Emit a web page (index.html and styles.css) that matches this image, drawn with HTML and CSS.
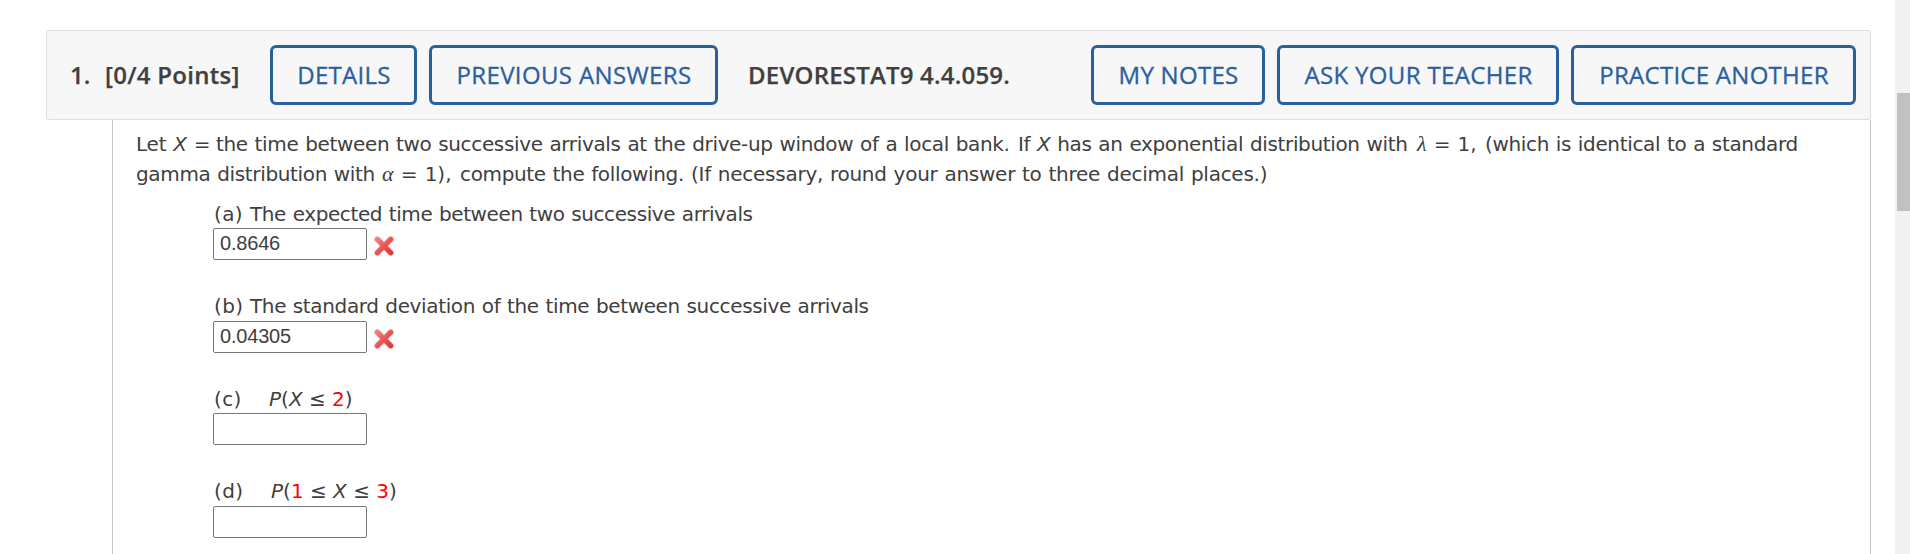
FILE: index.html
```html
<!DOCTYPE html>
<html lang="en">
<head>
<meta charset="utf-8">
<title>Question 1</title>
<link rel="stylesheet" href="styles.css">
</head>
<body>
<div class="page">
  <main class="question">
    <header class="bar">
      <span class="number">1.</span>
      <span class="points">[0/4 Points]</span>
      <button class="btn details">DETAILS</button>
      <button class="btn previous">PREVIOUS ANSWERS</button>
      <span class="code">DEVORESTAT9 4.4.059.</span>
      <button class="btn notes">MY NOTES</button>
      <button class="btn ask">ASK YOUR TEACHER</button>
      <button class="btn practice">PRACTICE ANOTHER</button>
    </header>
    <section class="body">
      <div class="prompt">
        <div class="line"><span class="intro">Let <i>X</i> =</span><span class="setup">the time between two successive arrivals at the drive-up window of a local bank.</span><span class="given">If <i>X</i> has an exponential distribution with</span><span class="lambda"><i class="greek">λ</i> = 1,</span><span>(which is identical to a standard</span></div>
        <div class="line"><span class="gamma">gamma distribution with</span><span class="alpha"><i class="greek">α</i> = 1),</span><span class="task">compute the following.</span><span class="rounding">(If necessary, round your answer to three decimal places.)</span></div>
      </div>
      <div class="part">
        <div class="label"><span class="tag">(a)</span><span class="text">The expected time between two successive arrivals</span></div>
        <div class="answer"><input class="field" value="0.8646">
          <svg class="wrong" viewBox="0 0 20 20"><defs><linearGradient id="red" gradientUnits="userSpaceOnUse" x1="2" y1="2" x2="18" y2="18"><stop offset="0" stop-color="#f28585"/><stop offset=".5" stop-color="#ea5555"/><stop offset="1" stop-color="#e03434"/></linearGradient></defs><path class="halo" d="M3.3 3.3 16.7 16.7M16.7 3.3 3.3 16.7"/><path class="cross" d="M3.3 3.3 16.7 16.7M16.7 3.3 3.3 16.7" stroke="url(#red)"/></svg></div>
      </div>
      <div class="part tall">
        <div class="label"><span class="tag">(b)</span><span class="text text-b">The standard deviation of the time between successive arrivals</span></div>
        <div class="answer"><input class="field" value="0.04305">
          <svg class="wrong" viewBox="0 0 20 20"><path class="halo" d="M3.3 3.3 16.7 16.7M16.7 3.3 3.3 16.7"/><path class="cross" d="M3.3 3.3 16.7 16.7M16.7 3.3 3.3 16.7" stroke="url(#red)"/></svg></div>
      </div>
      <div class="part">
        <div class="label"><span class="tag tag-c">(c)</span><span><i>P</i>(<i>X</i> ≤ <span class="value">2</span>)</span></div>
        <div class="answer"><input class="field"></div>
      </div>
      <div class="part tall">
        <div class="label"><span class="tag tag-d">(d)</span><span><i>P</i>(<span class="value">1</span> ≤ <i>X</i> ≤ <span class="value">3</span>)</span></div>
        <div class="answer"><input class="field"></div>
      </div>
    </section>
  </main>
  <div class="scrollbar"><div class="thumb"></div></div>
</div>
</body>
</html>
```
FILE: styles.css
```css
* { box-sizing: border-box; }
body { margin: 0; background: #fff; color: #404040; font: 20px/30px Verdana, "DejaVu Sans", sans-serif; overflow: hidden; }
.page { display: flex; justify-content: space-between; height: 554px; overflow: hidden; }
.question { width: 1825px; margin: 30px 0 0 46px; }
.bar { display: flex; align-items: center; height: 90px; padding: 0 14px 0 23px; border: 1px solid #dedede; border-radius: 3px; background: #f7f7f7; font: 600 24px/33px "Open Sans", sans-serif; white-space: nowrap; }
.number, .points, .code { padding-bottom: 2px; -webkit-text-stroke: .25px; }
.number { width: 35px; }
.points { width: 165px; letter-spacing: .27px; }
.btn { height: 60px; padding: 0 0 2px 1px; border: 3px solid #2a609d; border-radius: 6px; background: transparent; color: #2a609d; font: 500 24px/33px "Open Sans", sans-serif; white-space: nowrap; letter-spacing: .27px; -webkit-text-stroke: .3px; }
.details { width: 147px; }
.previous { width: 289px; margin-left: 12px; letter-spacing: .38px; }
.code { margin-left: 30px; letter-spacing: .2px; }
.notes { width: 174px; margin-left: auto; }
.ask { width: 282px; margin-left: 12px; letter-spacing: .35px; }
.practice { width: 285px; margin-left: 12px; }
.body { height: 440px; margin-left: 66px; padding: 9px 0 0 22px; border: solid #c8c8c8; border-width: 0 1px; white-space: nowrap; }
.prompt { margin: 0 0 10px 1px; letter-spacing: -.35px; word-spacing: .8px; }
.line { display: flex; height: 30px; }
.intro { width: 80px; letter-spacing: -.2px; }
.setup { width: 802px; }
.given { width: 399px; }
.lambda { width: 68px; letter-spacing: 0; }
.gamma { width: 246px; }
.alpha { width: 78px; letter-spacing: 0; }
.task { width: 231px; }
.rounding { letter-spacing: -.26px; }
.greek { font-family: "Liberation Serif", serif; font-size: 22px; line-height: 20px; }
.part { height: 92px; padding-left: 78px; }
.tall { height: 93px; }
.label { display: flex; height: 29px; padding-left: 1px; }
.tall .label { height: 30px; }
.tag { width: 36px; letter-spacing: .4px; }
.tag-c { width: 55px; }
.tag-d { width: 57px; }
.text { letter-spacing: -.4px; word-spacing: .7px; }
.text-b { letter-spacing: -.36px; }
.value { color: #f00; }
.answer { display: flex; align-items: center; height: 32px; }
.field { width: 154px; height: 32px; padding: 0 5px 2px 6px; border: 1px solid #767676; border-radius: 2px; background: #fff; color: #404040; font: 20px "Liberation Sans", Arial, sans-serif; letter-spacing: -.2px; }
.wrong { width: 20px; height: 20px; margin: 4px 0 0 7px; fill: none; stroke-linecap: round; }
.halo { stroke: #f8c4c4; stroke-width: 6.4; }
.cross { stroke-width: 5; }
.scrollbar { width: 15px; padding: 93px 0 0 2px; background: #f1f1f1; }
.thumb { height: 118px; background: #c1c1c1; }
```
